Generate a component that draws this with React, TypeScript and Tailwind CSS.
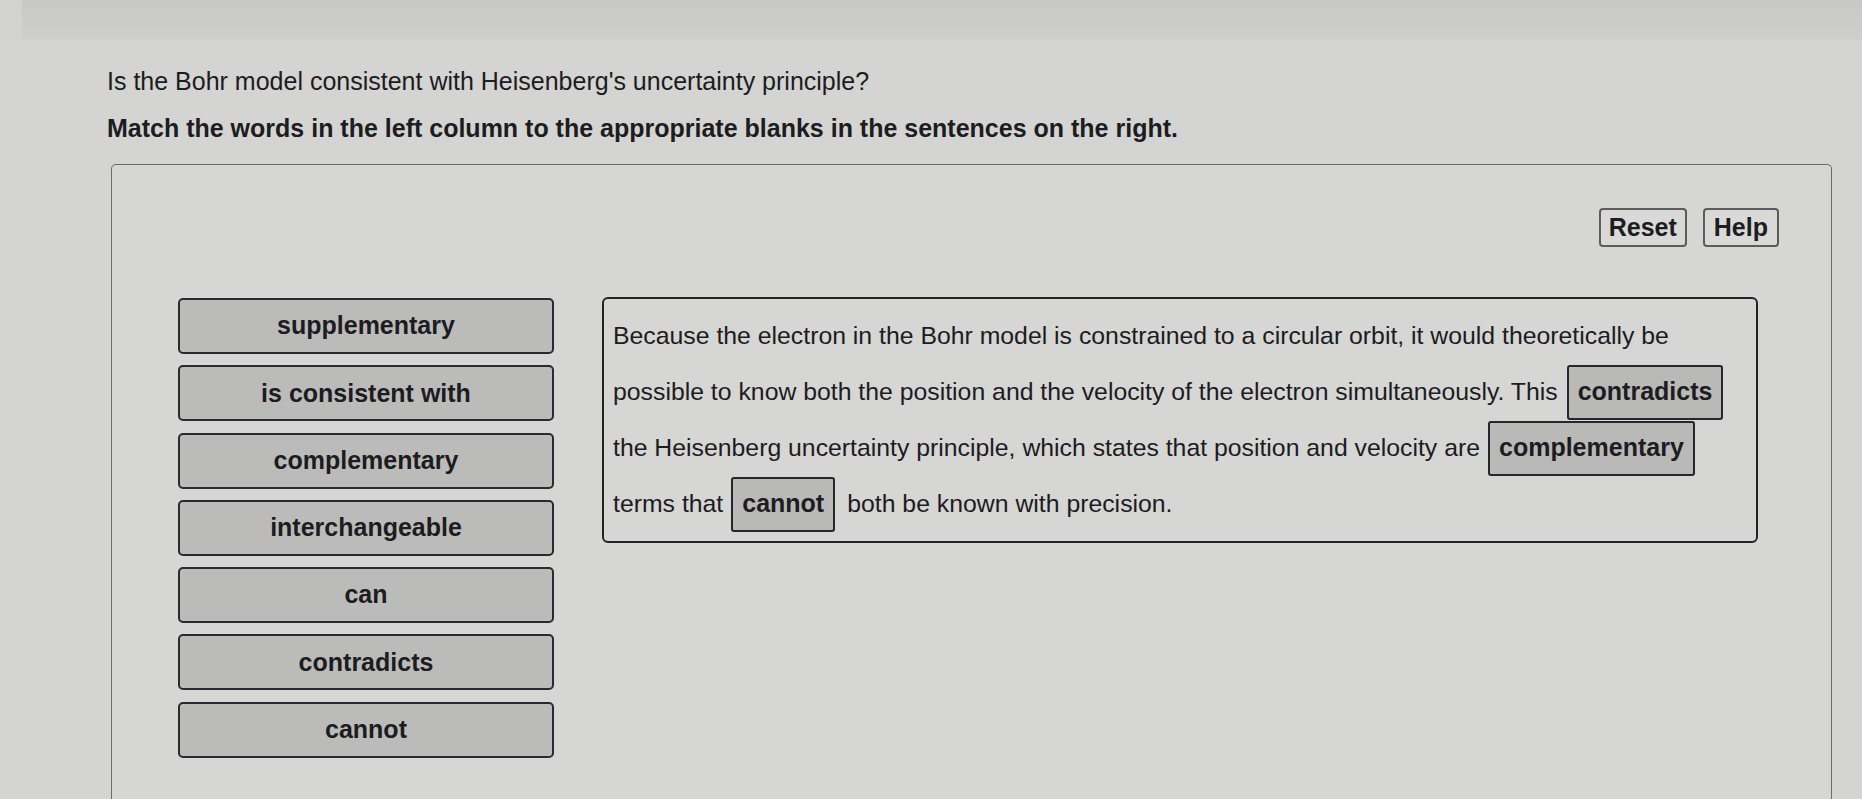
const words = [
  "supplementary",
  "is consistent with",
  "complementary",
  "interchangeable",
  "can",
  "contradicts",
  "cannot",
];

function Blank({ word }: { word: string }) {
  return (
    <span className="inline-flex h-[55px] items-center rounded-[3px] border-2 border-[#26262e] bg-[#b9b9b8] px-[9px] text-[25px] font-bold">
      {word}
    </span>
  );
}

export default function App() {
  return (
    <div className="h-[799px] w-full overflow-hidden bg-[#d4d4d2] font-['Liberation_Sans',Arial,sans-serif] text-[25px] text-[#1c1c21]">
      {/* top strip of the screen */}
      <div className="flex h-[40px]">
        <div className="w-[22px] bg-[#d2d2d0]" />
        <div className="flex-1 bg-gradient-to-b from-[#c8c8c6] to-[#cfcfcd]" />
      </div>

      <div className="pl-[107px] pt-[26px]">
        <p className="leading-[30px]">Is the Bohr model consistent with Heisenberg's uncertainty principle?</p>
        <p className="mt-[17px] font-bold leading-[30px]">
          Match the words in the left column to the appropriate blanks in the sentences on the right.
        </p>
      </div>

      <div className="ml-[111px] mr-[30px] mt-[21px] h-[700px] rounded-t-[5px] border border-b-0 border-[#6c6c6c] bg-[#d6d6d4] pt-[43px]">
        <div className="flex justify-end gap-[16px] pr-[52px]">
          <button className="h-[39px] rounded-[4px] border-2 border-[#5b5b60] bg-[#d9d9d7] px-[8px] font-bold leading-none">
            Reset
          </button>
          <button className="h-[39px] rounded-[4px] border-2 border-[#5b5b60] bg-[#d9d9d7] px-[9px] font-bold leading-none">
            Help
          </button>
        </div>

        <div className="mt-[50px] flex items-start gap-[48px] pl-[66px]">
          <div className="mt-[1px] flex w-[376px] flex-col gap-[11.3px]">
            {words.map((w) => (
              <div
                key={w}
                className="flex h-[56px] items-center justify-center rounded-[5px] border-2 border-[#2a2a33] bg-[#bbbbba] font-bold"
              >
                {w}
              </div>
            ))}
          </div>

          <div className="w-[1156px] rounded-[6px] border-2 border-[#22222a] pb-[9px] pl-[9px] pt-[9px] text-[24.8px]">
            <div className="flex h-[56px] items-center whitespace-nowrap">
              Because the electron in the Bohr model is constrained to a circular orbit, it would theoretically be
            </div>
            <div className="flex h-[56px] items-center gap-[9px] whitespace-nowrap">
              <span>possible to know both the position and the velocity of the electron simultaneously. This</span>
              <Blank word="contradicts" />
            </div>
            <div className="flex h-[56px] items-center gap-[8px] whitespace-nowrap">
              <span>the Heisenberg uncertainty principle, which states that position and velocity are</span>
              <Blank word="complementary" />
            </div>
            <div className="flex h-[56px] items-center whitespace-nowrap">
              <span>terms that</span>
              <span className="ml-[8px]">
                <Blank word="cannot" />
              </span>
              <span className="ml-[12px]">both be known with precision.</span>
            </div>
          </div>
        </div>
      </div>
    </div>
  );
}
